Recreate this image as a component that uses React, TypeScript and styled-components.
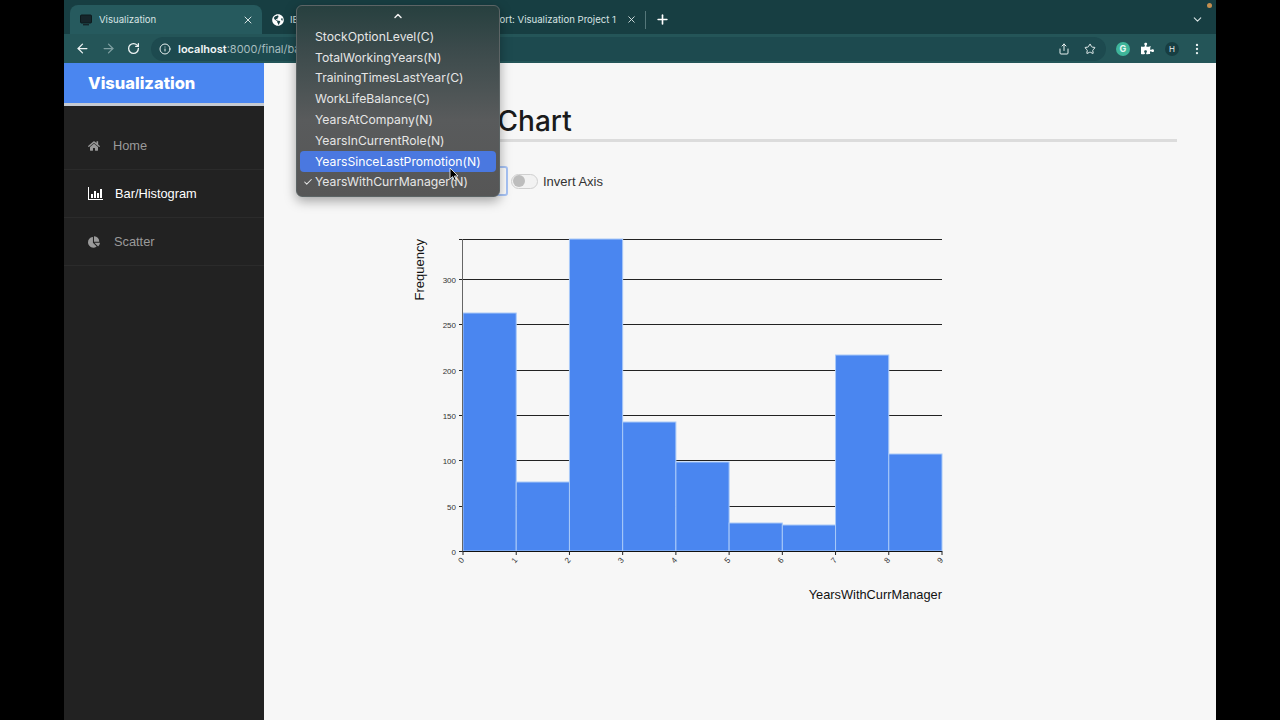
import { createGlobalStyle, styled } from "styled-components";
import {
  ArrowLeft,
  ArrowRight,
  ChevronDown,
  ChevronUp,
  Check,
  Info,
  Plus,
  RotateCw,
  Share,
  Star,
  X,
  MoreVertical,
} from "lucide-react";
import { FaChartPie, FaGlobeAmericas, FaHome, FaPuzzlePiece } from "react-icons/fa";

const GlobalStyle = createGlobalStyle`
  html, body { margin: 0; padding: 0; background: #000; }
  body { font-family: "Liberation Sans", Arial, sans-serif; }
`;

const Screen = styled.div`
  width: 1280px;
  height: 720px;
  display: flex;
  justify-content: center;
  background: #000;
  overflow: hidden;
  position: relative;
`;

const Browser = styled.div`
  width: 1152px;
  height: 720px;
  display: flex;
  flex-direction: column;
`;

const TabStrip = styled.div`
  height: 34px;
  flex: none;
  display: flex;
  align-items: flex-end;
  padding-left: 6px;
  background: #173e42;
  position: relative;
`;

const Tab = styled.div<{ $active?: boolean; $width: number; $gap?: number }>`
  width: ${(p) => p.$width}px;
  height: 29px;
  flex: none;
  box-sizing: border-box;
  display: flex;
  align-items: center;
  gap: ${(p) => p.$gap ?? 6}px;
  padding: 0 8px 0 10px;
  border-radius: 8px 8px 0 0;
  background: ${(p) => (p.$active ? "#265a5e" : "transparent")};
  color: #d8e4e4;
  font-family: Inter, sans-serif;
  font-size: 9.6px;
`;

const TabTitle = styled.span<{ $end?: boolean }>`
  flex: 1;
  min-width: 0;
  white-space: nowrap;
  overflow: hidden;
  text-align: ${(p) => (p.$end ? "right" : "left")};
`;

const TabDivider = styled.div`
  width: 1px;
  height: 18px;
  margin: 0 9px 5px 0;
  background: #55777a;
  flex: none;
`;

const NewTab = styled.div`
  height: 29px;
  display: flex;
  align-items: center;
  color: #fff;
`;

const RecordDot = styled.span`
  position: absolute;
  top: 3px;
  right: 4px;
  width: 5px;
  height: 5px;
  border-radius: 50%;
  background: #c48f50;
`;

const TabMenu = styled.div`
  margin-left: auto;
  margin-right: 12px;
  height: 29px;
  display: flex;
  align-items: center;
  color: #d8e4e4;
`;

const Toolbar = styled.div`
  height: 29px;
  flex: none;
  display: flex;
  align-items: center;
  background: #245558;
  padding: 0 10px 0 11px;
  box-sizing: border-box;
  color: #e8f0f0;
`;

const NavButton = styled.div<{ $dim?: boolean }>`
  width: 26px;
  display: flex;
  color: ${(p) => (p.$dim ? "#7fa0a2" : "#eef4f4")};
`;

const Omnibox = styled.div`
  width: 955px;
  height: 24px;
  margin-left: -2px;
  display: flex;
  align-items: center;
  gap: 7px;
  padding: 0 10px 0 8px;
  box-sizing: border-box;
  border-radius: 12px;
  background: #1d4a4f;
  font-family: Inter, sans-serif;
  font-size: 11px;
  white-space: nowrap;
`;

const Host = styled.span`
  font-weight: 600;
  color: #f2f6f6;
`;

const UrlPath = styled.span`
  color: #a7bdbf;
  font-weight: 400;
  margin-left: -7px;
`;

const OmniIcons = styled.div`
  margin-left: auto;
  display: flex;
  align-items: center;
  gap: 14px;
`;

const Extensions = styled.div`
  display: flex;
  align-items: center;
  gap: 11px;
  margin-left: 10px;
`;

const GrammarlyBadge = styled.span`
  width: 14px;
  height: 14px;
  border-radius: 50%;
  background: #3fb59a;
  color: #e8f8f4;
  font-family: Inter, sans-serif;
  font-size: 9px;
  font-weight: 700;
  display: flex;
  align-items: center;
  justify-content: center;
`;

const ProfileBadge = styled.span`
  width: 14px;
  height: 14px;
  border-radius: 50%;
  background: #173e42;
  color: #e8f0f0;
  font-family: Inter, sans-serif;
  font-size: 8px;
  display: flex;
  align-items: center;
  justify-content: center;
`;

const Body = styled.div`
  flex: 1;
  min-height: 0;
  display: flex;
`;

const Sidebar = styled.aside`
  width: 200px;
  flex: none;
  background: #222222;
`;

const Brand = styled.div`
  height: 40px;
  display: flex;
  align-items: center;
  padding-left: 24px;
  background: #4a86f0;
  border-bottom: 3px solid #c6cbd2;
  color: #fff;
  font-family: Inter, sans-serif;
  font-size: 16.5px;
  font-weight: 800;
`;

const Nav = styled.nav`
  padding-top: 16px;
`;

const NavItem = styled.div<{ $active?: boolean; $gap: number }>`
  height: 47px;
  display: flex;
  align-items: center;
  gap: ${(p) => p.$gap}px;
  padding-left: 24px;
  border-bottom: 1px solid #2b2b2b;
  color: ${(p) => (p.$active ? "#ffffff" : "#9a9a9a")};
  font-size: 12.8px;
`;

const Main = styled.main`
  flex: 1;
  min-width: 0;
  background: #f7f7f7;
  padding: 40px 39px 0 36px;
`;

const Heading = styled.h1`
  margin: 0;
  height: 39px;
  box-sizing: border-box;
  border-bottom: 3px solid #dcdcdc;
  font-family: Inter, sans-serif;
  font-size: 28px;
  line-height: 36px;
  font-weight: 500;
  color: #1b1b1b;
  padding-left: 145px;
`;

const Controls = styled.div`
  display: flex;
  align-items: center;
  margin-top: 24px;
  height: 30px;
`;

const SelectBox = styled.div`
  width: 208px;
  height: 30px;
  box-sizing: border-box;
  border: 2px solid #a9c5f7;
  border-radius: 3px;
  background: #fff;
`;

const SwitchTrack = styled.div`
  width: 27px;
  height: 15px;
  margin-left: 3px;
  box-sizing: border-box;
  border: 1px solid #d0d0d0;
  border-radius: 8px;
  background: #f2f2f2;
  display: flex;
  align-items: center;
  padding-left: 1px;
`;

const SwitchThumb = styled.span`
  width: 12px;
  height: 12px;
  border-radius: 50%;
  background: #bdbdbd;
`;

const SwitchLabel = styled.label`
  margin-left: 5px;
  font-size: 13px;
  color: #333;
`;

const ChartFrame = styled.div`
  margin: 29px 0 0 100px;
  width: 560px;
  height: 385px;
`;

const Menu = styled.div`
  position: absolute;
  left: 296px;
  top: 5px;
  width: 204px;
  height: 192px;
  box-sizing: border-box;
  padding: 0 3px;
  border: 1px solid #5c6465;
  border-radius: 6px;
  background: linear-gradient(180deg, #27403f 0%, #3b4a4b 22%, #595b5c 60%, #565656 100%);
  box-shadow: 0 4px 12px rgba(0, 0, 0, 0.35);
  color: #e6e6e6;
  font-family: Inter, sans-serif;
  font-size: 12.2px;
`;

const MenuArrow = styled.div`
  height: 20px;
  display: flex;
  justify-content: center;
  align-items: center;
  color: #f0f0f0;
`;

const MenuRow = styled.div<{ $selected?: boolean }>`
  height: 20.8px;
  display: flex;
  align-items: center;
  padding-left: 15px;
  position: relative;
  border-radius: 4px;
  white-space: nowrap;
  background: ${(p) => (p.$selected ? "#4a78e0" : "transparent")};
  color: ${(p) => (p.$selected ? "#ffffff" : "#e6e6e6")};
`;

const MenuCheck = styled.span`
  position: absolute;
  left: 3px;
  top: 5px;
  display: flex;
`;

const Cursor = styled.svg`
  position: absolute;
  left: 449px;
  top: 167px;
`;

const AxisText = styled.text`
  font-family: "Liberation Sans", Arial, sans-serif;
  fill: #111;
`;

const TickText = styled.text`
  font-family: "Liberation Sans", Arial, sans-serif;
  font-size: 8px;
  fill: #333;
`;

const menuItems = [
  "StockOptionLevel(C)",
  "TotalWorkingYears(N)",
  "TrainingTimesLastYear(C)",
  "WorkLifeBalance(C)",
  "YearsAtCompany(N)",
  "YearsInCurrentRole(N)",
  "YearsSinceLastPromotion(N)",
  "YearsWithCurrManager(N)",
];

// chart numbers are relative to the svg box, which starts at page (400, 225)
const left = 63;
const right = 542;
const base = 326;
const top = 14;
const barTops = [88, 257, 14, 197, 237, 298, 300, 130, 229];
const step = (right - left) / 9;
const gridValues = [0, 50, 100, 150, 200, 250, 300, 344];
const yFor = (v: number) => Math.round(base - v * ((base - top) / 344)) + 0.5;

const Histogram = () => (
  <svg width={560} height={385} viewBox="0 0 560 385">
    {gridValues.map((v) => (
      <line key={v} x1={left - 4} x2={right} y1={yFor(v)} y2={yFor(v)} stroke="#222" strokeWidth={1} />
    ))}
    {barTops.map((y, i) => (
      <rect
        key={i}
        x={left + i * step}
        y={y}
        width={step}
        height={base - y}
        fill="#4a86f0"
        stroke="#a9caf8"
        strokeWidth={1}
      />
    ))}
    <line x1={left - 0.5} x2={left - 0.5} y1={top} y2={base} stroke="#666" />
    <line x1={left} x2={right} y1={base + 0.5} y2={base + 0.5} stroke="#111" />
    {gridValues.slice(0, 7).map((v) => (
      <TickText key={v} x={left - 7} y={yFor(v) + 3} textAnchor="end">
        {v}
      </TickText>
    ))}
    {Array.from({ length: 10 }, (_, i) => {
      const x = left + i * step;
      return (
        <g key={i}>
          <line x1={x} x2={x} y1={base} y2={base + 4} stroke="#222" />
          <TickText
            x={x - 2}
            y={base + 12}
            textAnchor="middle"
            transform={`rotate(-50 ${x - 2} ${base + 9})`}
          >
            {i}
          </TickText>
        </g>
      );
    })}
    <AxisText fontSize={13} textAnchor="end" x={0} y={0} transform="translate(24 14) rotate(-90)">
      Frequency
    </AxisText>
    <AxisText fontSize={12.8} textAnchor="end" x={right} y={374}>
      YearsWithCurrManager
    </AxisText>
  </svg>
);

const BarChartIcon = () => (
  <svg width={15} height={13} viewBox="0 0 15 13" fill="#fff">
    <rect x={0} y={0} width={1} height={13} />
    <rect x={0} y={12} width={15} height={1} />
    <rect x={3} y={7} width={2} height={4} />
    <rect x={6} y={4} width={2} height={7} />
    <rect x={9} y={6} width={2} height={5} />
    <rect x={12} y={2} width={2} height={9} />
  </svg>
);

const MonitorIcon = () => (
  <svg width={12} height={12} viewBox="0 0 12 12">
    <rect x={0.5} y={1} width={11} height={8} rx={1} fill="#16252a" stroke="#0d1a1c" />
    <rect x={3} y={10} width={6} height={1.4} fill="#16252a" />
  </svg>
);

export default function App() {
  return (
    <Screen>
      <GlobalStyle />
      <Browser>
        <TabStrip>
          <Tab $active $width={192} $gap={7}>
            <MonitorIcon />
            <TabTitle>Visualization</TabTitle>
            <X size={12} />
          </Tab>
          <Tab $width={190}>
            <FaGlobeAmericas size={12} color="#fff" />
            <TabTitle>IBM HR Analytics</TabTitle>
          </Tab>
          <Tab $width={193} $gap={10}>
            <TabTitle $end>Report: Visualization Project 1</TabTitle>
            <X size={11} />
          </Tab>
          <TabDivider />
          <NewTab>
            <Plus size={15} strokeWidth={2.6} />
          </NewTab>
          <TabMenu>
            <ChevronDown size={13} />
          </TabMenu>
          <RecordDot />
        </TabStrip>
        <Toolbar>
          <NavButton>
            <ArrowLeft size={15} />
          </NavButton>
          <NavButton $dim>
            <ArrowRight size={15} />
          </NavButton>
          <NavButton>
            <RotateCw size={13} strokeWidth={2.4} />
          </NavButton>
          <Omnibox>
            <Info size={12} />
            <Host>localhost</Host>
            <UrlPath>:8000/final/bar.html</UrlPath>
            <OmniIcons>
              <Share size={12} />
              <Star size={12} />
            </OmniIcons>
          </Omnibox>
          <Extensions>
            <GrammarlyBadge>G</GrammarlyBadge>
            <FaPuzzlePiece size={13} color="#fff" />
            <ProfileBadge>H</ProfileBadge>
            <MoreVertical size={14} />
          </Extensions>
        </Toolbar>
        <Body>
          <Sidebar>
            <Brand>Visualization</Brand>
            <Nav>
              <NavItem $gap={13}>
                <FaHome size={12} />
                Home
              </NavItem>
              <NavItem $active $gap={12}>
                <BarChartIcon />
                Bar/Histogram
              </NavItem>
              <NavItem $gap={14}>
                <FaChartPie size={12} />
                Scatter
              </NavItem>
            </Nav>
          </Sidebar>
          <Main>
            <Heading>Bar Chart</Heading>
            <Controls>
              <SelectBox />
              <SwitchTrack>
                <SwitchThumb />
              </SwitchTrack>
              <SwitchLabel>Invert Axis</SwitchLabel>
            </Controls>
            <ChartFrame>
              <Histogram />
            </ChartFrame>
          </Main>
        </Body>
      </Browser>
      <Menu>
        <MenuArrow>
          <ChevronUp size={12} strokeWidth={3} />
        </MenuArrow>
        {menuItems.map((item, i) => (
          <MenuRow key={item} $selected={i === 6}>
            {i === 7 && (
              <MenuCheck>
                <Check size={10} strokeWidth={2.5} />
              </MenuCheck>
            )}
            {item}
          </MenuRow>
        ))}
      </Menu>
      <Cursor width={11} height={15} viewBox="0 0 11 15">
        <path d="M1 1 L1 12 L3.6 9.6 L5.4 13.6 L7.2 12.8 L5.4 9 L9 9 Z" fill="#000" stroke="#fff" strokeWidth={0.8} />
      </Cursor>
    </Screen>
  );
}
